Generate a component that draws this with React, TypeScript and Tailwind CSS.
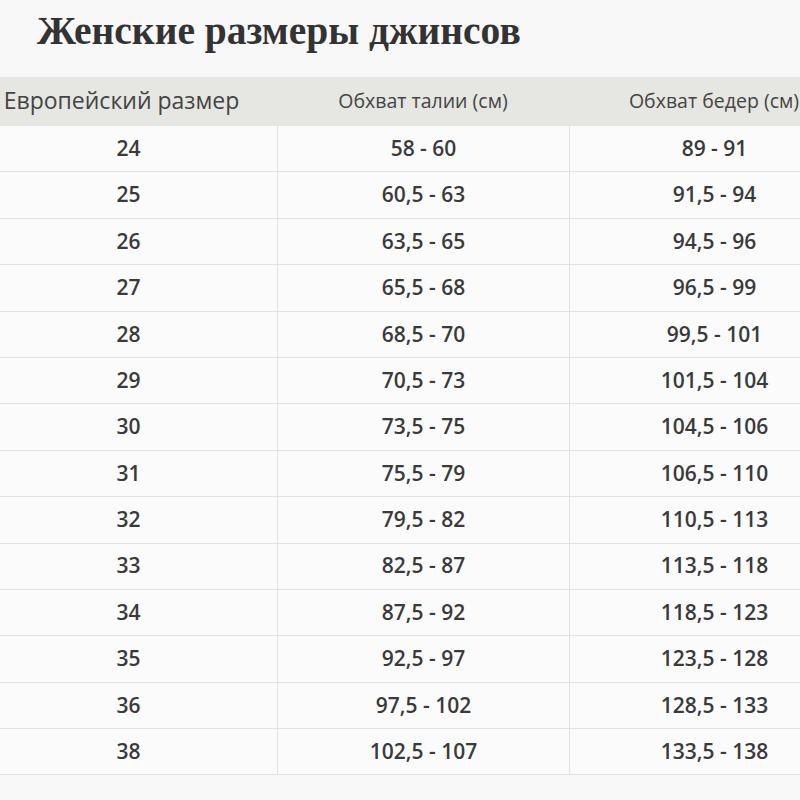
import React from 'react';

// Women's jeans size chart: EU size, waist and hip ranges (cm)
const rows: [string, string, string][] = [
  ['24', '58 - 60', '89 - 91'],
  ['25', '60,5 - 63', '91,5 - 94'],
  ['26', '63,5 - 65', '94,5 - 96'],
  ['27', '65,5 - 68', '96,5 - 99'],
  ['28', '68,5 - 70', '99,5 - 101'],
  ['29', '70,5 - 73', '101,5 - 104'],
  ['30', '73,5 - 75', '104,5 - 106'],
  ['31', '75,5 - 79', '106,5 - 110'],
  ['32', '79,5 - 82', '110,5 - 113'],
  ['33', '82,5 - 87', '113,5 - 118'],
  ['34', '87,5 - 92', '118,5 - 123'],
  ['35', '92,5 - 97', '123,5 - 128'],
  ['36', '97,5 - 102', '128,5 - 133'],
  ['38', '102,5 - 107', '133,5 - 138'],
];

export default function App() {
  return (
    <div className="w-[800px] h-[800px] overflow-hidden bg-[#f8f8f8]">
      <h1 className="h-[77px] pl-[37px] pt-[9px] font-['Liberation_Serif',serif] font-bold text-[39.5px] leading-[44px] text-[#333]">
        Женские размеры джинсов
      </h1>

      <div className="ml-[-20px] w-[879px]">
        {/* header band */}
        <div className="flex h-[49px] bg-[#e6e7e2] text-[#444] font-medium font-['Open_Sans',sans-serif]">
          <div className="w-[297px] flex items-center justify-center text-[23px] pr-[14px] pb-[2px]">Европейский размер</div>
          <div className="w-[292px] flex items-center justify-center text-[19.5px] pb-[2px]">Обхват талии (см)</div>
          <div className="w-[290px] flex items-center justify-center text-[19.5px] pb-[2px]">Обхват бедер (см)</div>
        </div>

        {rows.map(([size, waist, hips]) => (
          <div key={size} className="flex h-[46.4px] bg-[#fbfbfb] border-b border-[#e2e2e2] text-[#3a3a3a] font-semibold text-[21px] font-['Open_Sans',sans-serif]">
            <div className="w-[297px] flex items-center justify-center">{size}</div>
            <div className="w-[292px] flex items-center justify-center border-l border-[#e2e2e2]">{waist}</div>
            <div className="w-[290px] flex items-center justify-center border-l border-[#e2e2e2]">{hips}</div>
          </div>
        ))}
      </div>
    </div>
  );
}
